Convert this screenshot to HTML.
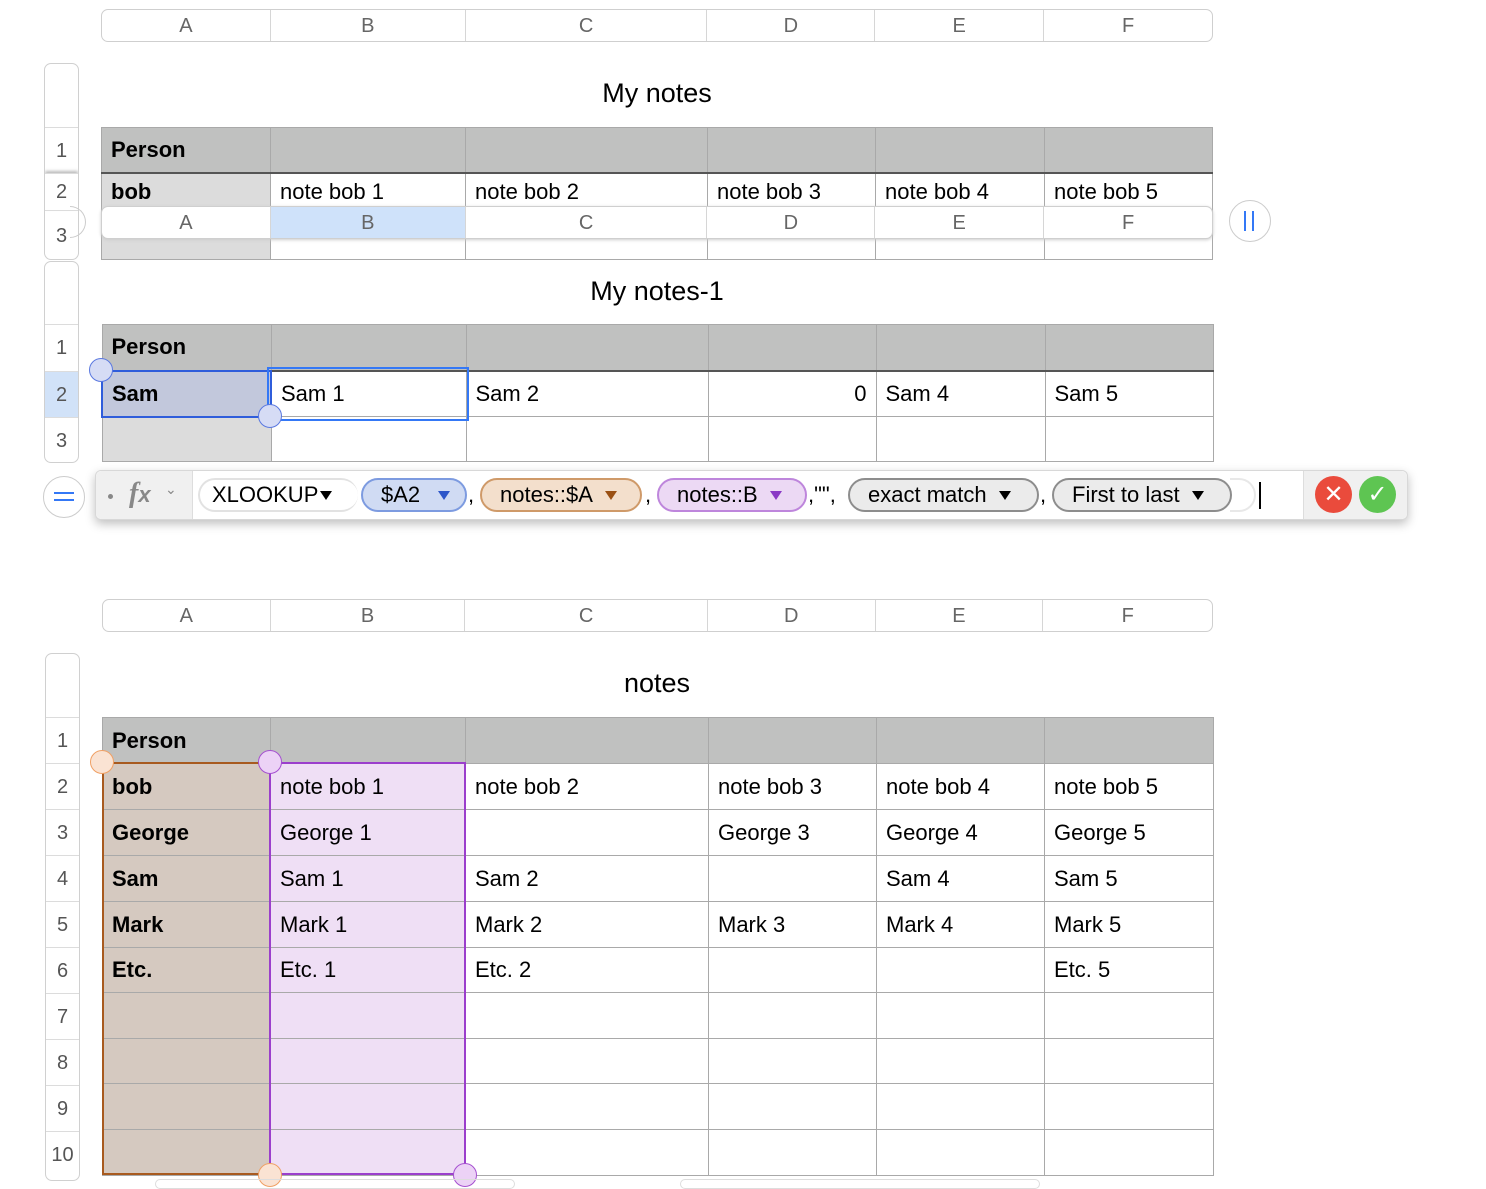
<!DOCTYPE html>
<html><head><meta charset="utf-8">
<style>
*{margin:0;padding:0;box-sizing:border-box}
body{width:1486px;height:1182px;background:#fff;position:relative;overflow:hidden;font-family:"Liberation Sans",Arial,sans-serif;color:#000}
.a{position:absolute}
.colbar{position:absolute;height:33px;border:1px solid #cfcfcf;border-radius:7px;background:#fff;display:flex;overflow:hidden}
.colbar div{border-right:1px solid #d6d6d6;text-align:center;font-size:20px;color:#666;line-height:33px}
.colbar div:last-child{border-right:none}
.rowbar{position:absolute;left:44px;width:35px;border:1px solid #d0d0d0;border-radius:7px;background:#fff;overflow:hidden}
.rowbar div{position:absolute;left:0;width:100%;border-top:1px solid #dcdcdc;text-align:center;font-size:20px;color:#555}
table{position:absolute;border-collapse:collapse;table-layout:fixed}
td{border:1px solid #a9a9a9;font-size:22px;padding:0 0 0 9px;white-space:nowrap;overflow:hidden;vertical-align:middle}
tr.h td{background:#c0c1c0;font-weight:bold}
td.b{font-weight:bold}
tr.t td{vertical-align:top;padding-top:5px}
.title{position:absolute;font-size:27px;width:1112px;text-align:center;left:101px}
.pill{position:absolute;top:478px;height:34px;border-radius:17px;font-size:22px;line-height:30px;padding-left:18px;border:2px solid;white-space:nowrap}
.tri{display:inline-block;width:0;height:0;border-left:6px solid transparent;border-right:6px solid transparent;border-top:9px solid;margin-left:12px;vertical-align:2px}
.comma{position:absolute;top:482px;font-size:22px}
.dot{position:absolute;width:24px;height:24px;border-radius:50%;border:1.5px solid}
</style></head><body>

<!-- Table 1 -->
<div class="colbar" style="left:101px;top:9px;width:1112px">
<div style="width:169px">A</div><div style="width:195px">B</div><div style="width:242px">C</div><div style="width:168px">D</div><div style="width:169px">E</div><div style="width:168px">F</div></div>
<div class="rowbar" style="top:63px;height:197px">
<div style="top:63px;height:46px;line-height:46px">1</div>
<div style="top:109px;height:37px;line-height:37px;box-shadow:0 -2px 3px #bbb">2</div>
<div style="top:146px;height:51px;line-height:51px">3</div></div>
<div class="title" style="top:78px">My notes</div>
<table style="left:101px;top:127px;width:1112px">
<colgroup><col style="width:169px"><col style="width:195px"><col style="width:242px"><col style="width:168px"><col style="width:169px"><col style="width:168px"></colgroup>
<tr class="h" style="height:45px"><td>Person</td><td></td><td></td><td></td><td></td><td></td></tr>
<tr class="t" style="height:46px"><td class="b" style="background:#dcdcdc;border-top:2px solid #555">bob</td><td style="border-top:2px solid #555">note bob 1</td><td style="border-top:2px solid #555">note bob 2</td><td style="border-top:2px solid #555">note bob 3</td><td style="border-top:2px solid #555">note bob 4</td><td style="border-top:2px solid #555">note bob 5</td></tr>
<tr style="height:41px"><td style="background:#dcdcdc"></td><td></td><td></td><td></td><td></td><td></td></tr>
</table>
<div class="a" style="left:70px;top:206px;width:16px;height:32px;border:1px solid #ccc;border-radius:0 16px 16px 0;border-left:none"></div>
<div class="colbar" style="left:101px;top:206px;width:1112px;box-shadow:0 1px 3px #ccc">
<div style="width:169px">A</div><div style="width:195px;background:#cfe2fa">B</div><div style="width:242px">C</div><div style="width:168px">D</div><div style="width:169px">E</div><div style="width:168px">F</div></div>
<div class="a" style="left:1229px;top:200px;width:42px;height:42px;border:1.5px solid #ccc;border-radius:50%;background:#fff"></div>
<div class="a" style="left:1244px;top:211px;width:2px;height:20px;background:#3478f6"></div>
<div class="a" style="left:1252px;top:211px;width:2px;height:20px;background:#3478f6"></div>

<!-- Table 2 -->
<div class="rowbar" style="top:261px;height:202px">
<div style="top:62px;height:47px;line-height:47px">1</div>
<div style="top:109px;height:46px;line-height:46px;background:#d1e2f8">2</div>
<div style="top:155px;height:47px;line-height:47px">3</div></div>
<div class="title" style="top:276px">My notes-1</div>
<table style="left:101px;top:324px;width:1112px">
<colgroup><col style="width:169px"><col style="width:195px"><col style="width:242px"><col style="width:168px"><col style="width:169px"><col style="width:168px"></colgroup>
<tr class="h" style="height:46px"><td>Person</td><td></td><td></td><td></td><td></td><td></td></tr>
<tr style="height:46px"><td class="b" style="background:#c2c8dc;border:2px solid #2f5ddb">Sam</td><td style="border-top:2px solid #555">Sam 1</td><td style="border-top:2px solid #555">Sam 2</td><td style="border-top:2px solid #555;text-align:right;padding-right:9px">0</td><td style="border-top:2px solid #555">Sam 4</td><td style="border-top:2px solid #555">Sam 5</td></tr>
<tr style="height:45px"><td style="background:#dcdcdc"></td><td></td><td></td><td></td><td></td><td></td></tr>
</table>
<div class="a" style="left:267px;top:367px;width:202px;height:54px;border:2px solid #3478f6"></div>
<div class="dot" style="left:89px;top:358px;background:#d6dcf5;border-color:#5a78e0"></div>
<div class="dot" style="left:258px;top:404px;background:#d6dcf5;border-color:#5a78e0"></div>

<!-- Formula bar -->
<div class="a" style="left:43px;top:476px;width:42px;height:42px;border:1.5px solid #ccc;border-radius:50%;background:#fff"></div>
<div class="a" style="left:54px;top:492px;width:20px;height:2px;background:#3478f6"></div>
<div class="a" style="left:54px;top:499px;width:20px;height:2px;background:#3478f6"></div>
<div class="a" style="left:95px;top:470px;width:1313px;height:50px;background:#fff;border:1px solid #d8d8d8;border-radius:6px;box-shadow:0 4px 10px rgba(0,0,0,0.25)"></div>
<div class="a" style="left:96px;top:471px;width:97px;height:48px;background:#f0f0f0;border-right:1px solid #ddd;border-radius:6px 0 0 6px"></div>
<div class="a" style="left:108px;top:494px;width:5px;height:5px;border-radius:50%;background:#888"></div>
<div class="a" style="left:129px;top:478px;font-family:'Liberation Serif',serif;font-style:italic;font-weight:bold;font-size:28px;color:#888">f<span style="font-size:22px;font-family:'Liberation Sans',sans-serif">x</span></div>
<div class="a" style="left:165px;top:481px;font-size:14px;color:#888">&#8964;</div>
<div class="a" style="left:1303px;top:471px;width:104px;height:48px;background:#f0f0f0;border-left:1px solid #ddd;border-radius:0 6px 6px 0"></div>

<div class="pill" style="left:198px;width:160px;border-color:#e2e2e2;background:#fff;padding-left:12px;border-right:none">XLOOKUP<span class="tri" style="margin-left:2px;border-top-color:#000"></span></div>
<div class="pill" style="left:361px;width:106px;border-color:#7d9be0;background:#d0dbf3">$A2<span class="tri" style="border-top-color:#2d56c9;margin-left:18px"></span></div>
<div class="comma" style="left:468px">,</div>
<div class="pill" style="left:480px;width:162px;border-color:#cf9a69;background:#f3dfcc">notes::$A<span class="tri" style="border-top-color:#9a5013"></span></div>
<div class="comma" style="left:645px">,</div>
<div class="pill" style="left:657px;width:150px;border-color:#be86dc;background:#ecd9f4">notes::B<span class="tri" style="border-top-color:#8a39c5"></span></div>
<div class="comma" style="left:808px">,"",</div>
<div class="pill" style="left:848px;width:191px;border-color:#8d8d8d;background:#ebebeb">exact match<span class="tri" style="border-top-color:#000"></span></div>
<div class="comma" style="left:1040px">,</div>
<div class="pill" style="left:1052px;width:180px;border-color:#8d8d8d;background:#ebebeb">First to last<span class="tri" style="border-top-color:#000"></span></div>
<div class="a" style="left:1230px;top:478px;width:26px;height:34px;border:2px solid #e8e8e8;border-left:none;border-radius:0 17px 17px 0"></div>
<div class="a" style="left:1259px;top:482px;width:2px;height:27px;background:#000"></div>
<div class="a" style="left:1315px;top:476px;width:37px;height:37px;border-radius:50%;background:#ea4b3c;color:#fff;font-size:24px;text-align:center;line-height:37px">&#10005;</div>
<div class="a" style="left:1359px;top:476px;width:37px;height:37px;border-radius:50%;background:#5ec552;color:#fff;font-size:24px;text-align:center;line-height:37px">&#10003;</div>

<!-- Table 3 -->
<div class="colbar" style="left:102px;top:599px;width:1111px">
<div style="width:168px">A</div><div style="width:195px">B</div><div style="width:243px">C</div><div style="width:168px">D</div><div style="width:168px">E</div><div style="width:169px">F</div></div>
<div class="rowbar" style="top:653px;left:45px;height:528px">
<div style="top:63px;height:46px;line-height:46px">1</div>
<div style="top:109px;height:46px;line-height:46px">2</div>
<div style="top:155px;height:46px;line-height:46px">3</div>
<div style="top:201px;height:46px;line-height:46px">4</div>
<div style="top:247px;height:46px;line-height:46px">5</div>
<div style="top:293px;height:46px;line-height:46px">6</div>
<div style="top:339px;height:46px;line-height:46px">7</div>
<div style="top:385px;height:46px;line-height:46px">8</div>
<div style="top:431px;height:46px;line-height:46px">9</div>
<div style="top:477px;height:46px;line-height:46px">10</div></div>
<div class="title" style="top:668px">notes</div>
<table style="left:102px;top:717px;width:1111px">
<colgroup><col style="width:168px"><col style="width:195px"><col style="width:243px"><col style="width:168px"><col style="width:168px"><col style="width:169px"></colgroup>
<tr class="h" style="height:46px"><td>Person</td><td></td><td></td><td></td><td></td><td></td></tr>
<tr style="height:46px"><td class="b" style="background:#d5c9c0">bob</td><td style="background:#efdff5">note bob 1</td><td style="border-top:1px solid #444">note bob 2</td><td style="border-top:1px solid #444">note bob 3</td><td style="border-top:1px solid #444">note bob 4</td><td style="border-top:1px solid #444">note bob 5</td></tr>
<tr style="height:46px"><td class="b" style="background:#d5c9c0">George</td><td style="background:#efdff5">George 1</td><td></td><td>George 3</td><td>George 4</td><td>George 5</td></tr>
<tr style="height:46px"><td class="b" style="background:#d5c9c0">Sam</td><td style="background:#efdff5">Sam 1</td><td>Sam 2</td><td></td><td>Sam 4</td><td>Sam 5</td></tr>
<tr style="height:46px"><td class="b" style="background:#d5c9c0">Mark</td><td style="background:#efdff5">Mark 1</td><td>Mark 2</td><td>Mark 3</td><td>Mark 4</td><td>Mark 5</td></tr>
<tr style="height:45px"><td class="b" style="background:#d5c9c0">Etc.</td><td style="background:#efdff5">Etc. 1</td><td>Etc. 2</td><td></td><td></td><td>Etc. 5</td></tr>
<tr style="height:46px"><td style="background:#d5c9c0"></td><td style="background:#efdff5"></td><td></td><td></td><td></td><td></td></tr>
<tr style="height:45px"><td style="background:#d5c9c0"></td><td style="background:#efdff5"></td><td></td><td></td><td></td><td></td></tr>
<tr style="height:46px"><td style="background:#d5c9c0"></td><td style="background:#efdff5"></td><td></td><td></td><td></td><td></td></tr>
<tr style="height:46px"><td style="background:#d5c9c0"></td><td style="background:#efdff5"></td><td></td><td></td><td></td><td></td></tr>
</table>
<div class="a" style="left:102px;top:762px;width:169px;height:413px;border:2px solid #a85a1f"></div>
<div class="a" style="left:269px;top:762px;width:197px;height:413px;border:2px solid #9b3fcc"></div>
<div class="dot" style="left:90px;top:750px;background:#fae3d3;border-color:#f0a064"></div>
<div class="dot" style="left:258px;top:750px;background:#ecd2f6;border-color:#a550d0"></div>
<div class="dot" style="left:258px;top:1163px;background:#fae3d3;border-color:#f0a064"></div>
<div class="dot" style="left:453px;top:1163px;background:#ecd2f6;border-color:#a550d0"></div>
<div class="a" style="left:155px;top:1179px;width:360px;height:10px;border:1px solid #ddd;border-radius:6px"></div>
<div class="a" style="left:680px;top:1179px;width:360px;height:10px;border:1px solid #ddd;border-radius:6px"></div>
</body></html>
